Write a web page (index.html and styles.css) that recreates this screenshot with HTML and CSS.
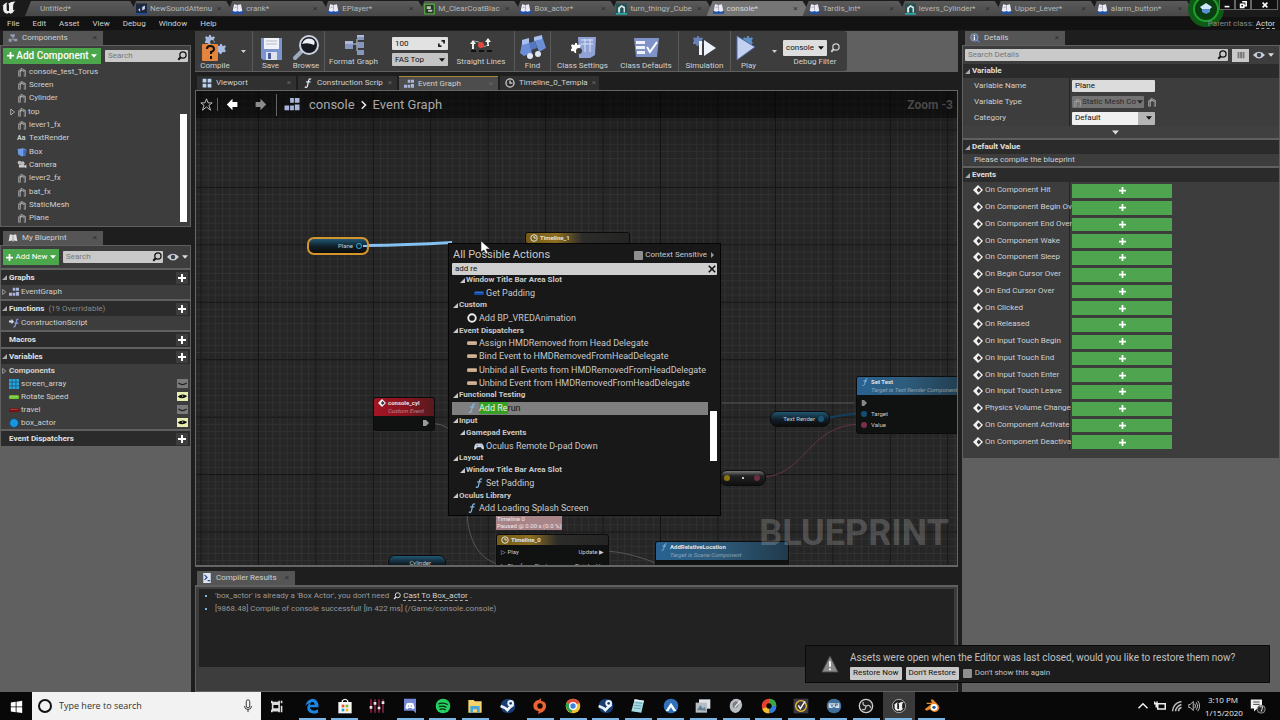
FILE: index.html
```html
<!DOCTYPE html>
<html lang="en">
<head>
    <meta charset="UTF-8">
    <meta name="viewport" content="width=device-width, initial-scale=1.0">
    <title>console - Blueprint Editor</title>
    <link rel="stylesheet" href="styles.css">
</head>
<body>

    <!-- shared icons -->
    <svg class="sprite" aria-hidden="true">
        <symbol id="i-mesh" viewBox="0 0 16 16"><path d="M2 6 7 1l7 4v10h-3V8L8 6 6 8v7H2z" fill="#a9a9a9"/><path d="M3 6l4-3 5 3M4 7v7M12 7v7" stroke="#444" fill="none"/></symbol>
        <symbol id="i-book" viewBox="0 0 16 16"><path d="M0 10h16v5H0z" fill="#1f4fb0"/><path d="M1 11 3 1l5 1 5-1 2 10-4 1-3-1-3 1z" fill="#e9ecf2"/><path d="M8 2v8M4 6l3-1" stroke="#8d929c"/></symbol>
        <symbol id="i-bookw" viewBox="0 0 16 16"><path d="M1 13 3 2l5 1 5-1 2 11-5-1-2 2-2-2z" fill="#e2e2e2"/><path d="M8 4v9" stroke="#666"/></symbol>
        <symbol id="i-meshtab" viewBox="0 0 16 16"><path d="M0 0h16v16H0z" fill="#245154"/><path d="M3 6 8 2l5 3v8h-2V7L8 5 6 7v6H3z" fill="#dfe6e6"/><path d="M0 14h16v2H0z" fill="#28c8c4"/></symbol>
        <symbol id="i-mat" viewBox="0 0 16 16"><path d="M1 1h14v14H1z" fill="#2b332b" stroke="#4ea23a" stroke-width="2"/><path d="M4 4h6v4H4zM6 9h6v3H6z" fill="#b9c4b6"/></symbol>
        <symbol id="i-sound" viewBox="0 0 16 16"><path d="M0 0h16v16H0z" fill="#1b2840"/><path d="M3 9l3-2v5zM9 5l4-2v5l-4 2z" fill="#c9d3ea"/><path d="M0 14h16v2H0z" fill="#2456b5"/></symbol>
        <symbol id="i-graph" viewBox="0 0 16 16"><path d="M6 1h4v5H6zM11 1h5v5h-5zM0 9h5v5H0zM6 9h4v5H6zM11 8h5v6h-5z" fill="#aab5dc"/></symbol>
        <symbol id="i-view" viewBox="0 0 16 16"><path d="M1 1h6v6H1zM9 1h6v6H9zM1 9h6v6H1zM9 9h6v6H9z" fill="#b9d3f3"/></symbol>
        <symbol id="i-fn" viewBox="0 0 16 16"><path d="M13 2C10 0 9 3 8.500 6L7.500 11C7 15 5 16 3 14M5 6h7" fill="none" stroke="#7fb4dc" stroke-width="2"/></symbol>
        <symbol id="i-fnw" viewBox="0 0 16 16"><path d="M13 2C10 0 9 3 8.500 6L7.500 11C7 15 5 16 3 14M5 6h7" fill="none" stroke="#e4eaf6" stroke-width="2"/></symbol>
        <symbol id="i-cons" viewBox="0 0 16 16"><path d="M0 4h4V1l4 5-4 4V7H0z" fill="#d6daf2"/><path d="M15 2c-3-1-3 3-4 7s-2 6-4 5M9 8h6" fill="none" stroke="#8f9de0" stroke-width="2"/></symbol>
        <symbol id="i-clock" viewBox="0 0 16 16"><circle cx="8" cy="8" r="6.500" fill="none" stroke="currentColor" stroke-width="2"/><path d="M8 4v4h4" fill="none" stroke="currentColor" stroke-width="2"/></symbol>
        <symbol id="i-find" viewBox="0 0 16 16"><circle cx="9.500" cy="6.500" r="5" fill="none" stroke="currentColor" stroke-width="2"/><path d="M6 10l-4 4" stroke="currentColor" stroke-width="3"/></symbol>
        <symbol id="i-eye" viewBox="0 0 16 16"><path d="M0 8q8-9 16 0-8 9-16 0z" fill="#ccd0d8"/><circle cx="8" cy="8" r="3" fill="#3a4250"/></symbol>
        <symbol id="i-eyeon" viewBox="0 0 16 16" preserveAspectRatio="none"><path d="M0 0h16v16H0z" fill="#e9edb0"/><path d="M1 8q7-7 14-1-7 8-14 1z" fill="#111"/><circle cx="8" cy="7" r="1" fill="#fff"/></symbol>
        <symbol id="i-eyeoff" viewBox="0 0 16 16" preserveAspectRatio="none"><path d="M0 0h16v16H0z" fill="#7a7a7a"/><path d="M2 7q6 6 12 0" fill="none" stroke="#222" stroke-width="2"/></symbol>
        <symbol id="i-down" viewBox="0 0 10 6"><path d="M0 0h10L5 6z" fill="currentColor"/></symbol>
        <symbol id="i-open" viewBox="0 0 8 8"><path d="M8 0v8H0z" fill="currentColor"/></symbol>
        <symbol id="i-closed" viewBox="0 0 8 8"><path d="M1 0l5 4-5 4z" fill="none" stroke="currentColor"/></symbol>
        <symbol id="i-plus" viewBox="0 0 8 8"><path d="M3 0h2v3h3v2H5v3H3V5H0V3h3z" fill="currentColor"/></symbol>
        <symbol id="i-event" viewBox="0 0 16 16"><path d="M8 0l8 8-8 8-8-8z" fill="#f2f2f2"/><path d="M9 4l4 4-4 4-3-4z" fill="#333"/></symbol>
        <symbol id="i-pill" viewBox="0 0 16 16"><rect y="5" width="16" height="6" rx="2" fill="currentColor"/><path d="M2 7h12" stroke="#fff" opacity=".4"/></symbol>
        <symbol id="i-gear" viewBox="0 0 24 24"><path d="M10 0h4l1 4 3 1 3-2 3 3-3 4v3l3 3-3 4-4-1-3 2-1 3h-4l-1-3-3-2-4 1-2-4 3-3v-3L0 6l3-3 4 2 2-1z" fill="currentColor"/></symbol>
        <symbol id="i-steam" viewBox="0 0 24 24"><circle cx="12" cy="12" r="11" fill="#173e74"/><path d="M1 12l7 3 3 3 4-4 5-4" stroke="#eef3fa" stroke-width="4" fill="none"/><circle cx="16" cy="8" r="5" fill="#eef3fa"/><circle cx="16" cy="8" r="2" fill="#173e74"/></symbol>
        <symbol id="i-unreal" viewBox="0 0 24 24"><path d="M1 8q4-5 8-6-1 2-1 4v10q1 2 4 1V7q0-2-2-2 5-4 13-4-4 3-4 7v8l3-1q-3 6-8 7l-2-2-3 2q-6-1-7-7V8q-1-1-1 0z" fill="#f0f0f0"/></symbol>
    </svg>

    <header class="titlebar">
        <div class="logo"><svg><use href="#i-unreal"/></svg></div>
        <nav class="window-tabs">
            <a class="wtab first" href="#"><span>Untitled*</span></a>
            <a class="wtab" href="#"><svg><use href="#i-sound"/></svg><span>NewSoundAttenu</span><i>×</i></a>
            <a class="wtab" href="#"><svg><use href="#i-book"/></svg><span>crank*</span><i>×</i></a>
            <a class="wtab" href="#"><svg><use href="#i-book"/></svg><span>EPlayer*</span><i>×</i></a>
            <a class="wtab" href="#"><svg><use href="#i-mat"/></svg><span>M_ClearCoatBlac</span><i>×</i></a>
            <a class="wtab" href="#"><svg><use href="#i-book"/></svg><span>Box_actor*</span><i>×</i></a>
            <a class="wtab" href="#"><svg><use href="#i-meshtab"/></svg><span>turn_thingy_Cube</span><i>×</i></a>
            <a class="wtab active" href="#"><svg><use href="#i-book"/></svg><span>console*</span><i>×</i></a>
            <a class="wtab" href="#"><svg><use href="#i-book"/></svg><span>Tardis_int*</span><i>×</i></a>
            <a class="wtab" href="#"><svg><use href="#i-meshtab"/></svg><span>levers_Cylinder*</span><i>×</i></a>
            <a class="wtab" href="#"><svg><use href="#i-book"/></svg><span>Upper_Lever*</span><i>×</i></a>
            <a class="wtab" href="#"><svg><use href="#i-book"/></svg><span>alarm_button*</span><i>×</i></a>
        </nav>
        <svg class="tutorial" viewBox="0 0 38 28"><circle cx="19" cy="9" r="18" fill="#0e5a16"/><circle cx="19" cy="9" r="12" fill="#0a3d10" stroke="#1fa02c" stroke-width="2"/><path d="M13 7l6-4 6 4-6 6z" fill="#cfe4ff"/><path d="M15 9v3l4 2 4-2V9" fill="#5b8fd0"/></svg>
        <div class="win-buttons">
            <button aria-label="Minimize"><svg viewBox="0 0 10 10"><path d="M2 6h6v2H2z" fill="#fff"/></svg></button>
            <button aria-label="Restore"><svg viewBox="0 0 10 10"><path d="M4 1h5v5H7M2 4h4v4H2z" fill="none" stroke="#fff" stroke-width="2"/></svg></button>
            <button aria-label="Close" class="wide"><svg viewBox="0 0 10 10"><path d="M2 2l6 6M8 2 2 8" stroke="#fff" stroke-width="2"/></svg></button>
        </div>
    </header>

    <div class="menubar">
        <a href="#">File</a><a href="#">Edit</a><a href="#">Asset</a><a href="#">View</a><a href="#">Debug</a><a href="#">Window</a><a href="#">Help</a>
        <p class="parent">Parent class: <a href="#">Actor</a></p>
    </div>

    <main class="editor">

        <aside class="left">
            <div class="ptab"><svg viewBox="0 0 16 16"><path d="M4 2h7v4H4zM1 9h5v5H1zM9 9h6v4H9z" fill="#8e9bb0"/><path d="M8 5v6" stroke="#ccc"/></svg><span>Components</span><i>×</i></div>
            <section class="panel components">
                <div class="tools">
                    <button class="green big"><svg><use href="#i-plus"/></svg>Add Component<svg class="arr"><use href="#i-down"/></svg></button>
                    <label class="search"><input type="text" placeholder="Search" aria-label="Search components"><svg><use href="#i-find"/></svg></label>
                </div>
                <div class="tree-wrap">
                    <ul class="tree">
                        <li><svg><use href="#i-mesh"/></svg>console_test_Torus</li>
                        <li><svg><use href="#i-mesh"/></svg>Screen</li>
                        <li><svg><use href="#i-mesh"/></svg>Cylinder</li>
                        <li class="has-children"><svg class="tri"><use href="#i-closed"/></svg><svg><use href="#i-mesh"/></svg>top</li>
                        <li><svg><use href="#i-mesh"/></svg>lever1_fx</li>
                        <li><b class="aa">Aa</b>TextRender</li>
                        <li><svg viewBox="0 0 16 16"><path d="M1 3l9-1 5 2-1 9-6 2-6-3z" fill="#6f9be6"/><path d="M10 4l5 0-1 9-4 1z" fill="#4069b8"/></svg>Box</li>
                        <li><svg viewBox="0 0 16 16"><circle cx="4" cy="4" r="3" fill="#bbb"/><circle cx="9" cy="5" r="3" fill="#bbb"/><path d="M3 7h8v5H3zM11 9l4-2v6l-4-2z" fill="#ccc"/></svg>Camera</li>
                        <li><svg><use href="#i-mesh"/></svg>lever2_fx</li>
                        <li><svg><use href="#i-mesh"/></svg>bat_fx</li>
                        <li><svg><use href="#i-mesh"/></svg>StaticMesh</li>
                        <li><svg><use href="#i-mesh"/></svg>Plane</li>
                    </ul>
                    <div class="thumb"></div>
                </div>
            </section>

            <div class="ptab second"><svg><use href="#i-bookw"/></svg><span>My Blueprint</span><i>×</i></div>
            <section class="panel blueprint">
                <div class="tools">
                    <button class="green"><svg><use href="#i-plus"/></svg>Add New<svg class="arr"><use href="#i-down"/></svg></button>
                    <label class="search"><input type="text" placeholder="Search" aria-label="Search blueprint"><svg><use href="#i-find"/></svg></label>
                    <button class="eye" aria-label="View options"><svg><use href="#i-eye"/></svg><svg class="arr"><use href="#i-down"/></svg></button>
                </div>
                <div class="group">
                    <h3><svg><use href="#i-open"/></svg>Graphs<button aria-label="Add graph"><svg><use href="#i-plus"/></svg></button></h3>
                    <p class="tall"><svg class="tri"><use href="#i-closed"/></svg><svg class="ico"><use href="#i-graph"/></svg>EventGraph</p>
                </div>
                <div class="group">
                    <h3><svg><use href="#i-open"/></svg>Functions <small>(19 Overridable)</small><button aria-label="Add function"><svg><use href="#i-plus"/></svg></button></h3>
                    <p class="tall"><svg class="tri"></svg><svg class="ico"><use href="#i-cons"/></svg>ConstructionScript</p>
                </div>
                <div class="group">
                    <h3><svg></svg>Macros<button aria-label="Add macro"><svg><use href="#i-plus"/></svg></button></h3>
                </div>
                <div class="group">
                    <h3><svg><use href="#i-open"/></svg>Variables<button aria-label="Add variable"><svg><use href="#i-plus"/></svg></button></h3>
                    <p><svg class="tri"><use href="#i-closed"/></svg><b>Components</b></p>
                    <p><svg class="tri"></svg><svg class="ico" viewBox="0 0 16 16"><path d="M0 0h16v16H0z" fill="#28a5dc"/><path d="M5 0v16M11 0v16M0 5h16M0 11h16" stroke="#17405a"/></svg>screen_array<svg class="vis"><use href="#i-eyeoff"/></svg></p>
                    <p><svg class="tri"></svg><svg class="ico lime"><use href="#i-pill"/></svg>Rotate Speed<svg class="vis"><use href="#i-eyeon"/></svg></p>
                    <p><svg class="tri"></svg><svg class="ico maroon"><use href="#i-pill"/></svg>travel<svg class="vis"><use href="#i-eyeoff"/></svg></p>
                    <p><svg class="tri"></svg><svg class="ico" viewBox="0 0 16 16"><circle cx="8" cy="8" r="7" fill="#1795dd" stroke="#0b4770"/></svg>box_actor<svg class="vis"><use href="#i-eyeon"/></svg></p>
                </div>
                <div class="group">
                    <h3><svg></svg>Event Dispatchers<button aria-label="Add dispatcher"><svg><use href="#i-plus"/></svg></button></h3>
                </div>
            </section>
        </aside>

        <section class="center">
            <div class="toolbar">
                <div class="toolbar-inner">
                    <button class="tool w40"><svg viewBox="0 0 28 26"><g color="#a9bbe0"><svg x="4" y="0" width="15" height="15"><use href="#i-gear"/></svg><svg x="15" y="9" width="13" height="14"><use href="#i-gear"/></svg></g><circle cx="11" cy="7" r="2" fill="#3d3d3d"/><rect x="1" y="9" width="16" height="17" rx="1" fill="#e5843c"/><path d="M6 14q0-3 3-3 4 0 4 3 0 2-3 3v2M10 21v3" fill="none" stroke="#111" stroke-width="2"/></svg>Compile</button>
                    <button class="drop" aria-label="Compile options"><svg><use href="#i-down"/></svg></button>
                    <button class="tool w36 sep"><svg viewBox="0 0 28 26"><path d="M4 3h21v22H6l-2-2z" fill="#7b93cf"/><path d="M7 3h15v11H7z" fill="#f1f3f8"/><path d="M9 6h11M9 9h11" stroke="#b3bacb"/><path d="M9 17h11v8H9z" fill="#dfe3ee"/><path d="M11 18h3v6h-3z" fill="#4a5f9a"/></svg>Save</button>
                    <button class="tool w36"><svg viewBox="0 0 28 26"><path d="M10 16 3 23" stroke="#9fa9bd" stroke-width="4" stroke-linecap="round"/><circle cx="17" cy="10" r="9" fill="#16181f" stroke="#ccd2e0" stroke-width="2"/><path d="M10 9q3-7 10-5 4 2 2 6-6-3-12-1z" fill="#eceef5"/></svg>Browse</button>
                    <button class="tool w58 sep short"><svg viewBox="0 0 28 24"><path d="M12 11h5M17 6v12" stroke="#c9cfe0"/><path d="M5 8h8v8H5zM17 2h7v5h-7zM17 9h7v6h-7zM17 17h7v5h-7z" fill="#8796bd"/><path d="M5 8h8v3H5zM17 2h7v2h-7z" fill="#adb9d9"/></svg>Format Graph</button>
                    <div class="fields">
                        <label class="num"><input type="text" value="100" aria-label="Spacing"><svg viewBox="0 0 8 8"><path d="M1 4v3h3M7 4V1H4" fill="none" stroke="#222" stroke-width="2"/></svg></label>
                        <label class="pick"><select aria-label="Layout"><option>FAS Top</option></select><svg><use href="#i-down"/></svg></label>
                    </div>
                    <button class="tool w66 short"><svg viewBox="0 0 28 24"><path d="M6 16V8M21 13V6" stroke="#eee" stroke-width="2"/><path d="M3 11l3-4 3 4zM18 9l3-4 3 4z" fill="#eee"/><path d="M7 8q6 0 8 4t7-2" fill="none" stroke="#aaa"/><circle cx="14" cy="12" r="3" fill="#e2473c"/><path d="M4 18h5M12 18h5M20 18h5" stroke="#111" stroke-width="2"/></svg>Straight Lines</button>
                    <button class="tool w36 sep"><svg viewBox="0 0 28 26"><path d="M3 8l7-2 3 12-8 3-4-3zM15 4l8-3 4 12-7 4z" fill="#6b8fd6"/><path d="M10 8l6-2 2 7-6 2z" fill="#5478c0"/><path d="M3 5l7-2v5l-7 2zM15 2l8-2v4l-8 2z" fill="#a9c0ee"/><circle cx="11" cy="21" r="3" fill="#e0e6f3"/><circle cx="19" cy="19" r="3" fill="#e0e6f3"/></svg>Find</button>
                    <button class="tool w64 sep"><svg viewBox="0 0 28 26"><path d="M9 2h18l-1 18-5 3H10z" fill="#91a3d6"/><path d="M12 5h12M12 9h12M16 4v13M21 4v13" stroke="#dbe2f5"/><g color="#fff"><svg x="2" y="8" width="17" height="17"><use href="#i-gear"/></svg></g><circle cx="10" cy="16" r="3" fill="#3d3d3d"/></svg>Class Settings</button>
                    <button class="tool w64"><svg viewBox="0 0 28 26"><path d="M2 3h25l-2 19H4z" fill="#7f93c8"/><path d="M4 6h9v3H4zM4 11h9v3H4zM5 16h8v3H5z" fill="#eef1fa"/><path d="M15 12l3 5 7-10" fill="none" stroke="#fff" stroke-width="2"/></svg>Class Defaults</button>
                    <button class="tool w51 sep"><svg viewBox="0 0 28 26"><g color="#6a80b8"><svg x="2" y="1" width="24" height="24"><use href="#i-gear"/></svg></g><path d="M8 6h3v14H8zM13 5l12 8-12 8z" fill="#eef2fb"/></svg>Simulation</button>
                    <button class="tool w36 sep"><svg viewBox="0 0 28 26"><g color="#5d8fc4"><svg x="8" y="1" width="20" height="22"><use href="#i-gear"/></svg></g><path d="M2 1l18 11L2 25z" fill="#c3d0ef" stroke="#5168a8"/></svg>Play</button>
                    <button class="drop" aria-label="Play options"><svg><use href="#i-down"/></svg></button>
                    <div class="filter">
                        <div><label class="pick light"><select id="debug"><option>console</option></select><svg><use href="#i-down"/></svg></label><svg class="mag"><use href="#i-find"/></svg></div>
                        <label for="debug">Debug Filter</label>
                    </div>
                </div>
            </div>

            <nav class="doc-tabs">
                <a href="#" class="w99"><svg><use href="#i-view"/></svg><span>Viewport</span><i>×</i></a>
                <a href="#" class="w99"><svg><use href="#i-fnw"/></svg><span>Construction Scrip</span><i>×</i></a>
                <a href="#" class="w99 active"><svg><use href="#i-graph"/></svg><span>Event Graph</span><i>×</i></a>
                <a href="#" class="w99"><svg><use href="#i-clock"/></svg><span>Timeline_0_Templa</span><i>×</i></a>
            </nav>

            <div class="graph">
                <svg class="backdrop">
                    <defs>
                        <pattern id="minor" x="4.500" y="-19" width="7.180" height="7.180" patternUnits="userSpaceOnUse"><path d="M0 .5h8M.5 0v8" stroke="#313131" stroke-width=".9"/></pattern>
                        <pattern id="major" x="4.500" y="-19" width="57.440" height="57.440" patternUnits="userSpaceOnUse"><path d="M0 .5h58M.5 0v58" stroke="#141414"/></pattern>
                        <linearGradient id="shade" x2="0" y2="1"><stop offset="0" stop-color="#000" stop-opacity=".3"/><stop offset=".15" stop-color="#000" stop-opacity="0"/></linearGradient>
                    </defs>
                    <rect width="100%" height="100%" fill="#262626"/>
                    <rect width="100%" height="100%" fill="url(#minor)"/>
                    <rect width="100%" height="100%" fill="url(#major)"/>
                    <rect width="100%" height="100%" fill="url(#shade)"/>
                    <path d="M170 154.500 Q210 154 256 151.500" fill="none" stroke="#84c0f2" stroke-width="3"/>
                    <path d="M236 332q10 1 18 6M526 312h132" fill="none" stroke="#555"/>
                    <path d="M271 424q3 40 30 49M412 460q25 2 52 14" fill="none" stroke="#555"/>
                    <path d="M625 328q16-3 38-6" fill="none" stroke="#12405c" stroke-width="2"/>
                    <path d="M565 386c45 0 45-52 100-53" fill="none" stroke="#643540"/>
                </svg>
                <div class="crumbs">
                    <button aria-label="Favourite" class="star"><svg viewBox="0 0 16 16"><path d="M8 1l2 5h5l-4 3 2 6-5-4-5 4 2-6-4-3h5z" fill="none" stroke="#ddd"/></svg></button>
                    <button aria-label="Back"><svg viewBox="0 0 16 16"><path d="M1 8l7-7v4h6v6H8v4z" fill="#fff"/></svg></button>
                    <button aria-label="Forward"><svg viewBox="0 0 16 16"><path d="M15 8 8 1v4H2v6h6v4z" fill="#8c8c8c"/></svg></button>
                    <div class="path"><svg class="gicon"><use href="#i-graph"/></svg><a href="#">console</a><svg class="chev" viewBox="0 0 8 12"><path d="M1 1l5 5-5 5" fill="none" stroke="#eee" stroke-width="2"/></svg><a href="#">Event Graph</a></div>
                    <span class="zoom">Zoom -3</span>
                </div>

                <div class="node pill selected n-plane">Plane<svg viewBox="0 0 12 8"><circle cx="4" cy="4" r="2.500" fill="none" stroke="#35a7e0"/><path d="M8 4h4" stroke="#8cc6f0" stroke-width="2"/></svg></div>
                <div class="node n-timeline1"><h4 class="gold"><svg><use href="#i-clock"/></svg>Timeline_1</h4></div>
                <div class="node n-console"><h4 class="red"><svg><use href="#i-event"/></svg><span>console_cyl<small>Custom Event</small></span></h4><div class="pins"><span></span><svg viewBox="0 0 8 8"><path d="M1 1h3l3 3-3 3H1z" fill="#999"/></svg></div></div>
                <div class="node pill n-text">Text Render<svg viewBox="0 0 8 8"><circle cx="4" cy="4" r="3" fill="#1a5578"/></svg></div>
                <div class="node n-settext"><h4 class="blue"><svg><use href="#i-fn"/></svg><span>Set Text<small>Target is Text Render Component</small></span></h4>
                    <div class="inputs">
                        <p><svg viewBox="0 0 8 8"><path d="M1 0h3l4 4-4 4H1z" fill="#888"/></svg></p>
                        <p><svg viewBox="0 0 8 8"><circle cx="4" cy="4" r="4" fill="#134e74"/></svg>Target</p>
                        <p><svg viewBox="0 0 8 8"><circle cx="4" cy="4" r="4" fill="#7d2f47"/></svg>Value</p>
                    </div>
                </div>
                <div class="node pill grey n-conv"><svg viewBox="0 0 44 8"><circle cx="6" cy="4" r="3" fill="#8a7412"/><circle cx="22" cy="4" r="1" fill="#fff"/><circle cx="36" cy="4" r="3" fill="#6d2d40"/></svg></div>
                <div class="bubble">Timeline 0<br>Paused @ 0.00 s (0.0 %)</div>
                <div class="node n-timeline0"><h4 class="gold"><svg><use href="#i-clock"/></svg>Timeline_0</h4>
                    <div class="pins"><span>▷ Play</span><span>Update ▶</span></div>
                    <div class="pins"><span>▶ Play from Start</span><span>Finished ▷</span></div>
                </div>
                <div class="node pill n-cyl">Cylinder</div>
                <div class="node n-add"><h4 class="blue"><svg><use href="#i-fn"/></svg><span>AddRelativeLocation<small>Target is Scene Component</small></span></h4></div>
                <div class="watermark">BLUEPRINT</div>

                <div class="actions">
                    <div class="actions-head"><h2>All Possible Actions</h2><label><input type="checkbox">Context Sensitive</label><svg viewBox="0 0 6 8"><path d="M1 0l4 4-4 4z" fill="#999"/></svg></div>
                    <label class="actions-search"><input type="text" value="add re" aria-label="Search actions"><svg viewBox="0 0 10 10"><path d="M1 1l8 8M9 1 1 9" stroke="#111" stroke-width="2"/></svg></label>
                    <div class="actions-body">
                        <ul>
                            <li class="cat sub"><svg><use href="#i-open"/></svg>Window Title Bar Area Slot</li>
                            <li class="deep"><svg class="navy"><use href="#i-pill"/></svg>Get Padding</li>
                            <li class="cat"><svg><use href="#i-open"/></svg>Custom</li>
                            <li><svg viewBox="0 0 16 16"><circle cx="8" cy="8" r="6" fill="none" stroke="#eee" stroke-width="3"/></svg>Add BP_VREDAnimation</li>
                            <li class="cat"><svg><use href="#i-open"/></svg>Event Dispatchers</li>
                            <li><svg class="tan"><use href="#i-pill"/></svg>Assign HMDRemoved from Head Delegate</li>
                            <li><svg class="tan"><use href="#i-pill"/></svg>Bind Event to HMDRemovedFromHeadDelegate</li>
                            <li><svg class="tan"><use href="#i-pill"/></svg>Unbind all Events from HMDRemovedFromHeadDelegate</li>
                            <li><svg class="tan"><use href="#i-pill"/></svg>Unbind Event from HMDRemovedFromHeadDelegate</li>
                            <li class="cat"><svg><use href="#i-open"/></svg>Functional Testing</li>
                            <li class="picked"><svg><use href="#i-fn"/></svg><mark>Add Re</mark>run</li>
                            <li class="cat"><svg><use href="#i-open"/></svg>Input</li>
                            <li class="cat sub"><svg><use href="#i-open"/></svg>Gamepad Events</li>
                            <li class="deep"><svg viewBox="0 0 16 16"><path d="M3 4h10q3 3 3 9h-3l-2-3H5l-2 3H0q0-6 3-9z" fill="#ccd3e4"/><path d="M4 7h2M11 7h1" stroke="#333"/></svg>Oculus Remote D-pad Down</li>
                            <li class="cat"><svg><use href="#i-open"/></svg>Layout</li>
                            <li class="cat sub"><svg><use href="#i-open"/></svg>Window Title Bar Area Slot</li>
                            <li class="deep"><svg><use href="#i-fn"/></svg>Set Padding</li>
                            <li class="cat"><svg><use href="#i-open"/></svg>Oculus Library</li>
                            <li><svg><use href="#i-fn"/></svg>Add Loading Splash Screen</li>
                        </ul>
                        <div class="thumb"></div>
                    </div>
                </div>
                <svg class="cursor" viewBox="0 0 10 14"><path d="M1 0v11l3-2 2 4 2-1-2-4h4z" fill="#fff" stroke="#222" stroke-width=".5"/></svg>
            </div>

            <div class="ptab results-tab"><svg viewBox="0 0 16 16"><path d="M2 0h12v16H2z" fill="#dde6f5"/><path d="M4 3l4 4-4 4M9 12h4" fill="none" stroke="#2b4a86" stroke-width="2"/></svg><span>Compiler Results</span><i>×</i></div>
            <section class="results">
                <ul>
                    <li>'box_actor' is already a 'Box Actor', you don't need <svg><use href="#i-find"/></svg><a href="#">Cast To Box_actor</a> .</li>
                    <li>[9868.48] Compile of console successful! [in 422 ms] (/Game/console.console)</li>
                </ul>
            </section>
        </section>

        <aside class="right">
            <div class="ptab"><svg viewBox="0 0 16 16"><path d="M9 9l6 6" stroke="#557ac0" stroke-width="3"/><circle cx="7" cy="7" r="6" fill="#5b6d94" stroke="#b4bfd8"/><path d="M7 3v2M7 6v5" stroke="#fff" stroke-width="2"/></svg><span>Details</span><i>×</i></div>
            <section class="panel details">
                <div class="tools">
                    <label class="search"><input type="text" placeholder="Search Details" aria-label="Search details"><svg><use href="#i-find"/></svg></label>
                    <button class="matrix" aria-label="Property matrix"><svg viewBox="0 0 16 12"><path d="M4 1v10M8 1v10M12 1v10" stroke="#777" stroke-width="3"/></svg></button>
                    <button class="eye" aria-label="View options"><svg><use href="#i-eye"/></svg><svg class="arr"><use href="#i-down"/></svg></button>
                </div>
                <h3><svg><use href="#i-open"/></svg>Variable</h3>
                <div class="props">
                    <label for="vname">Variable Name</label><div><input id="vname" type="text" value="Plane"></div>
                    <label for="vtype">Variable Type</label><div class="type"><label class="pick off"><svg class="mesh"><use href="#i-mesh"/></svg><select id="vtype" disabled><option>Static Mesh Co</option></select><svg><use href="#i-down"/></svg></label><svg class="mesh"><use href="#i-mesh"/></svg></div>
                    <label for="vcat">Category</label><div><label class="pick cat"><select id="vcat"><option>Default</option></select><svg><use href="#i-down"/></svg></label></div>
                </div>
                <button class="more" aria-label="Show advanced"><svg><use href="#i-down"/></svg></button>
                <h3 class="line"><svg><use href="#i-open"/></svg>Default Value</h3>
                <p class="note">Please compile the blueprint</p>
                <h3 class="line"><svg><use href="#i-open"/></svg>Events</h3>
                <ul class="events">
                    <li><span><svg><use href="#i-event"/></svg>On Component Hit</span><button aria-label="Add"><svg><use href="#i-plus"/></svg></button></li>
                    <li><span><svg><use href="#i-event"/></svg>On Component Begin Ov</span><button aria-label="Add"><svg><use href="#i-plus"/></svg></button></li>
                    <li><span><svg><use href="#i-event"/></svg>On Component End Over</span><button aria-label="Add"><svg><use href="#i-plus"/></svg></button></li>
                    <li><span><svg><use href="#i-event"/></svg>On Component Wake</span><button aria-label="Add"><svg><use href="#i-plus"/></svg></button></li>
                    <li><span><svg><use href="#i-event"/></svg>On Component Sleep</span><button aria-label="Add"><svg><use href="#i-plus"/></svg></button></li>
                    <li><span><svg><use href="#i-event"/></svg>On Begin Cursor Over</span><button aria-label="Add"><svg><use href="#i-plus"/></svg></button></li>
                    <li><span><svg><use href="#i-event"/></svg>On End Cursor Over</span><button aria-label="Add"><svg><use href="#i-plus"/></svg></button></li>
                    <li><span><svg><use href="#i-event"/></svg>On Clicked</span><button aria-label="Add"><svg><use href="#i-plus"/></svg></button></li>
                    <li><span><svg><use href="#i-event"/></svg>On Released</span><button aria-label="Add"><svg><use href="#i-plus"/></svg></button></li>
                    <li><span><svg><use href="#i-event"/></svg>On Input Touch Begin</span><button aria-label="Add"><svg><use href="#i-plus"/></svg></button></li>
                    <li><span><svg><use href="#i-event"/></svg>On Input Touch End</span><button aria-label="Add"><svg><use href="#i-plus"/></svg></button></li>
                    <li><span><svg><use href="#i-event"/></svg>On Input Touch Enter</span><button aria-label="Add"><svg><use href="#i-plus"/></svg></button></li>
                    <li><span><svg><use href="#i-event"/></svg>On Input Touch Leave</span><button aria-label="Add"><svg><use href="#i-plus"/></svg></button></li>
                    <li><span><svg><use href="#i-event"/></svg>Physics Volume Change</span><button aria-label="Add"><svg><use href="#i-plus"/></svg></button></li>
                    <li><span><svg><use href="#i-event"/></svg>On Component Activate</span><button aria-label="Add"><svg><use href="#i-plus"/></svg></button></li>
                    <li><span><svg><use href="#i-event"/></svg>On Component Deactiva</span><button aria-label="Add"><svg><use href="#i-plus"/></svg></button></li>
                </ul>
            </section>
        </aside>
    </main>

    <div class="toast">
        <svg viewBox="0 0 20 20"><path d="M10 1l9 18H1z" fill="#8b8b8b" stroke="#444"/><path d="M10 7v6M10 15v2" stroke="#fff" stroke-width="2"/></svg>
        <div>
            <p>Assets were open when the Editor was last closed, would you like to restore them now?</p>
            <div class="toast-row"><button>Restore Now</button><button>Don't Restore</button><label><input type="checkbox">Don't show this again</label></div>
        </div>
    </div>

    <footer class="taskbar">
        <button class="start" aria-label="Start"><svg viewBox="0 0 16 16"><path d="M1 3l6-1v6H1zM8 2l7-1v7H8zM1 9h6v6l-6-1zM8 9h7v7l-7-1z" fill="#fff"/></svg></button>
        <label class="tsearch"><svg class="ring" viewBox="0 0 16 16"><circle cx="8" cy="8" r="6" fill="none" stroke="#111" stroke-width="2"/></svg><input type="text" placeholder="Type here to search" aria-label="Type here to search"><svg class="mic" viewBox="0 0 10 16"><rect x="3" y="1" width="4" height="9" rx="2" fill="none" stroke="#222"/><path d="M1 8q0 4 4 4t4-4M5 12v3" fill="none" stroke="#222"/></svg></label>
        <button class="taskview" aria-label="Task view"><svg viewBox="0 0 16 16"><path d="M2 5h8v6H2zM1 1v2h9V1M1 15v-2h9v2M13 1v3M13 7v8" fill="none" stroke="#ddd" stroke-width="2"/></svg></button>
        <nav class="apps">
            <a href="#" class="open" aria-label="Edge"><svg viewBox="0 0 24 24"><path d="M2 12Q4 2 13 1q9 1 9 13H9q1 5 6 5 3 0 6-2v5q-4 2-9 1-8-2-7-10 1-4 4-5-4 0-7 4zM9 10h7q0-4-3-4-4 0-4 4z" fill="#1d86e0"/></svg></a>
            <a href="#" class="open" aria-label="Store"><svg viewBox="0 0 24 24"><path d="M8 7V4q4-4 8 0v3" fill="none" stroke="#eee" stroke-width="2"/><path d="M2 6h20v17H2z" fill="#f5f5f5"/><path d="M7 10h4v4H7z" fill="#e8502a"/><path d="M13 10h4v4h-4z" fill="#7cb52c"/><path d="M7 16h4v4H7z" fill="#1f9fe0"/><path d="M13 16h4v4h-4z" fill="#f5b51b"/></svg></a>
            <a href="#" aria-label="Mixer"><svg viewBox="0 0 24 24"><path d="M3 2v20M9 2v20M15 2v20M21 2v20" stroke="#a92852" stroke-width="2"/><path d="M1 12h4v4H1zM7 6h4v4H7zM13 13h4v4h-4zM19 5h4v4h-4z" fill="#e8e8e8"/></svg></a>
            <a href="#" class="open" aria-label="Discord"><svg viewBox="0 0 24 24"><path d="M3 1h18v22l-4-4H3z" fill="#7387d6"/><path d="M7 8q5-2 10 0l2 7-3 2-2-2h-4l-2 2-3-2z" fill="#fff"/><circle cx="10" cy="12" r="1" fill="#7387d6"/><circle cx="14" cy="12" r="1" fill="#7387d6"/></svg></a>
            <a href="#" class="open" aria-label="Spotify"><svg viewBox="0 0 24 24"><circle cx="12" cy="12" r="11" fill="#23cf5f"/><path d="M5 9q8-3 14 1M6 13q6-2 11 1M7 17q5-2 9 1" fill="none" stroke="#0c2a16" stroke-width="2"/></svg></a>
            <a href="#" class="open" aria-label="Explorer"><svg viewBox="0 0 24 24"><path d="M2 3h8l2 2h10v17H2z" fill="#f4d36b"/><path d="M5 12h14v10h-4v-5H9v5H5z" fill="#4aa6dd"/></svg></a>
            <a href="#" aria-label="Steam"><svg><use href="#i-steam"/></svg></a>
            <a href="#" class="open" aria-label="Origin"><svg viewBox="0 0 24 24"><path d="M14 0l-1 4q9 1 8 9-1 7-8 9l-4 2 1-4q-8-1-8-9 1-7 8-8z" fill="#ea6434"/><circle cx="12" cy="12" r="4" fill="#120805"/></svg></a>
            <a href="#" class="open" aria-label="Chrome"><svg viewBox="0 0 24 24"><circle cx="12" cy="12" r="11" fill="#f2c12e"/><path d="M12 12 2 7Q6 1 12 1t10 6z" fill="#dd4b3a"/><path d="M12 12 2 7q-3 10 8 16z" fill="#2ea052"/><circle cx="12" cy="12" r="5" fill="#3f7fe0" stroke="#fff" stroke-width="2"/></svg></a>
            <a href="#" class="open" aria-label="Steam"><svg><use href="#i-steam"/></svg></a>
            <a href="#" class="open" aria-label="Notepad"><svg viewBox="0 0 24 24"><path d="M7 2l14 2-4 18-15-2z" fill="#a6dbe2"/><path d="M8 7l10 1M7 11l10 1M6 15l10 1" stroke="#4d8b97"/><path d="M7 2l14 2v2L6 4z" fill="#e8f4f5"/></svg></a>
            <a href="#" class="open" aria-label="NordVPN"><svg viewBox="0 0 24 24"><circle cx="12" cy="12" r="11" fill="#2f72bb"/><path d="M4 19l8-12 8 12-4 1-4-6-4 6z" fill="#fff"/></svg></a>
            <a href="#" class="open" aria-label="Photos"><svg viewBox="0 0 24 24"><path d="M6 2h17v14H6z" fill="#dfe2e4"/><path d="M1 7h17v15H1z" fill="#b5bcc2"/><path d="M3 18l5-7 4 5 2-3 3 6z" fill="#5f7f95"/></svg></a>
            <a href="#" class="open" aria-label="Paint"><svg viewBox="0 0 24 24"><path d="M4 6q6-8 14-3 6 6 1 14-5 8-12 4-7-5-3-15z" fill="#b9bcc0"/><path d="M8 7q6-5 8 2-1 7-7 6-4-3-1-8z" fill="#7b8088"/><path d="M10 14l9-10" stroke="#eee" stroke-width="2"/></svg></a>
            <a href="#" class="open" aria-label="Colours"><svg viewBox="0 0 24 24"><circle cx="12" cy="12" r="11" fill="#e6402e"/><path d="M12 12V1q11 0 11 11z" fill="#38a846"/><path d="M12 12h11q0 11-11 11z" fill="#2f7de0"/><path d="M12 12v11Q4 23 2 16z" fill="#f0bd27"/><circle cx="12" cy="12" r="4" fill="#0a0a0a"/></svg></a>
            <a href="#" class="open" aria-label="Norton"><svg viewBox="0 0 24 24"><path d="M1 1h22v22H1z" fill="#3a3c42"/><circle cx="12" cy="12" r="8" fill="none" stroke="#f0bb2c" stroke-width="2"/><path d="M8 11l3 5 7-11" fill="none" stroke="#fff" stroke-width="2"/></svg></a>
            <a href="#" class="open" aria-label="VR"><svg viewBox="0 0 24 24"><circle cx="12" cy="12" r="11" fill="#41709c"/><path d="M4 8h16v7h-5l-3-2-3 2H4z" fill="#d6e1ec"/><path d="M7 9l2 4 2-4M14 13V9h3v2h-3" fill="none" stroke="#27496d"/></svg></a>
            <a href="#" class="open" aria-label="OBS"><svg viewBox="0 0 24 24"><circle cx="12" cy="12" r="10" fill="#1b1b1d" stroke="#ccc" stroke-width="2"/><path d="M12 12q-6-1-4-6M12 12q6-3 7 3M12 12q0 7-6 5" fill="none" stroke="#bbb" stroke-width="2"/></svg></a>
            <a href="#" class="open current" aria-label="Unreal Editor"><svg viewBox="0 0 24 24"><circle cx="12" cy="12" r="10" fill="#222" stroke="#ddd"/><svg x="4" y="4" width="16" height="16"><use href="#i-unreal"/></svg></svg></a>
            <a href="#" class="open" aria-label="Blender"><svg viewBox="0 0 24 24"><path d="M1 17 11 9H4V7h8l-2-4 3-1 8 8q4 4 0 9-7 5-12-2l-5 2z" fill="#ec8b2b"/><circle cx="15" cy="14" r="5" fill="#fff"/><circle cx="15" cy="14" r="2.500" fill="#235a9c"/></svg></a>
        </nav>
        <div class="tray">
            <svg viewBox="0 0 16 16"><path d="M2 11l6-6 6 6" fill="none" stroke="#eee" stroke-width="2"/></svg>
            <svg viewBox="0 0 16 16"><path d="M5 5h10v7H5zM1 2v3h3V2M3 5v4h2" fill="none" stroke="#eee" stroke-width="2"/></svg>
            <svg viewBox="0 0 16 16"><path d="M2 15Q3 4 14 2M6 15q1-7 8-9M10 15q0-4 4-5" fill="none" stroke="#bbb" stroke-width="2"/></svg>
            <svg viewBox="0 0 16 16"><path d="M1 6h2l4-4v12l-4-4H1zM9 5q2 3 0 6M11 3q4 5 0 10M13 1q5 7 0 14" fill="none" stroke="#eee"/></svg>
            <time>3:10 PM<br>1/15/2020</time>
            <svg class="notes" viewBox="0 0 20 20"><path d="M1 2h14v11H9l-4 4v-4H1z" fill="#f2f2f2"/><path d="M4 5h8M4 8h8" stroke="#222"/><circle cx="14" cy="14" r="5" fill="#222" stroke="#aaa"/><path d="M12 11h4l-2 6" fill="none" stroke="#fff"/></svg>
        </div>
    </footer>

</body>
</html>
```

FILE: styles.css
```css
* {
    box-sizing: border-box;
}

body {
    margin: 0;
    height: 100vh;
    display: flex;
    flex-direction: column;
    overflow: hidden;
    background: #1e1e1e;
    color: #d0d0d0;
    font-family: Roboto, "Liberation Sans", sans-serif;
    font-size: 8px;
    line-height: 12px;
}

ul, p, h2, h3, h4 {
    margin: 0;
    padding: 0;
    list-style: none;
    font-weight: 400;
    font-size: 8px;
}

a {
    color: inherit;
    text-decoration: none;
}

button, input, select {
    font: inherit;
    color: inherit;
    margin: 0;
    padding: 0;
    border: none;
    border-radius: 0;
    background: none;
    outline: none;
    appearance: none;
}

svg {
    display: block;
    flex: none;
    width: 10px;
    height: 10px;
}

i {
    font-style: normal;
    color: #2e2e2e;
}

.sprite {
    display: none;
}

/* title bar */
.titlebar {
    display: flex;
    height: 17px;
    background: #1b1b1b;
    flex: none;
}

.logo {
    width: 25px;
}

.logo svg {
    width: 14px;
    height: 14px;
    margin: 1px 2px;
}

.window-tabs {
    display: flex;
    flex: 1;
    padding-right: 3px;
}

.wtab {
    display: flex;
    align-items: center;
    flex: 1 1 0;
    min-width: 0;
    height: 15px;
    margin: 1px -9px 0 0;
    padding: 0 14px 0 6px;
    gap: 3px;
    background: linear-gradient(#5a5a5a, #484848);
    clip-path: polygon(0 100%, 6px 0, calc(100% - 9px) 0, 100% 100%);
    white-space: nowrap;
    color: #b8b8b8;
}

.wtab.first {
    padding-left: 15px;
}

.wtab.active {
    background: #757575;
    color: #d8d8d8;
}

.wtab svg {
    width: 11px;
    height: 12px;
}

.wtab i {
    margin-left: auto;
}

.tutorial {
    width: 38px;
    height: 28px;
    z-index: 1;
    margin-left: -3px;
}

.win-buttons {
    display: flex;
    position: relative;
    z-index: 2;
    margin: 0 2px 0 -6px;
}

.win-buttons button {
    display: flex;
    align-items: center;
    justify-content: center;
    width: 16px;
    height: 10px;
    border: 1px solid #666;
    border-top: none;
    background: #111;
}

.win-buttons .wide {
    width: 27px;
}

.win-buttons svg {
    width: 8px;
    height: 8px;
}

.menubar {
    display: flex;
    align-items: center;
    flex: none;
    gap: 13px;
    height: 13px;
    padding: 0 5px 0 7px;
    background: #121212;
}

.parent {
    position: relative;
    z-index: 2;
    margin-left: auto;
    color: #888;
}

.parent a {
    color: #ddd;
    border-bottom: 1px dashed #aaa;
}

/* columns */
.editor {
    display: flex;
    flex: 1;
    gap: 4px;
    min-height: 0;
    padding-top: 1px;
}

.left {
    display: flex;
    flex-direction: column;
    width: 191px;
}

.center {
    display: flex;
    flex-direction: column;
    flex: 1;
    min-width: 0;
}

.right {
    display: flex;
    flex-direction: column;
    width: 318px;
}

.ptab {
    display: flex;
    align-items: center;
    flex: none;
    gap: 4px;
    width: 100px;
    height: 14px;
    margin-left: 3px;
    padding: 0 6px 0 5px;
    background: #555;
}

.ptab i {
    margin-left: auto;
}

.ptab.second {
    margin-top: 4px;
}

.panel {
    background: #3d3d3d;
    border: 1px solid #606060;
}

.tools {
    display: flex;
    align-items: center;
    gap: 4px;
    padding: 2px;
}

.green {
    display: flex;
    align-items: center;
    justify-content: center;
    gap: 2px;
    width: 56px;
    height: 16px;
    background: #4ca64c;
    color: #fff;
}

.green.big {
    width: 98px;
    font-size: 10px;
    font-weight: 500;
}

.green svg {
    width: 7px;
    height: 7px;
}

svg.arr {
    width: 6px;
    height: 4px;
}

.search {
    display: flex;
    align-items: center;
    flex: 1;
    min-width: 0;
    height: 12px;
    padding: 0 1px 0 3px;
    background: #c9c9c9;
    color: #111;
    border-radius: 1px;
}

.search input {
    flex: 1;
    min-width: 0;
}

.search input::placeholder {
    color: #777;
}

.eye {
    display: flex;
    align-items: center;
    gap: 3px;
    color: #ddd;
}

.eye svg:first-child {
    width: 12px;
    height: 12px;
}

/* components tree */
.components {
    height: 182px;
}

.components .tools {
    height: 19px;
}

.tree-wrap {
    display: flex;
    justify-content: space-between;
    height: 160px;
}

.tree {
    display: flex;
    flex-direction: column;
}

.tree li {
    display: flex;
    align-items: center;
    flex: 1;
    gap: 2px;
    padding-left: 16px;
}

.tree .has-children {
    padding-left: 9px;
    gap: 1px;
}

.tree .tri {
    width: 6px;
    height: 6px;
}

.aa {
    width: 10px;
    font-size: 7px;
}

.thumb {
    width: 7px;
    background: #fff;
}

.tree-wrap .thumb {
    margin: 49px 3px 3px 0;
}

/* my blueprint */
.blueprint {
    flex: 1;
    background: #606060;
}

.blueprint .tools {
    background: #3d3d3d;
    height: 22px;
}

.group {
    margin-top: 2px;
    background: #3d3d3d;
}

.group h3 {
    display: flex;
    align-items: center;
    gap: 2px;
    height: 15px;
    padding: 0 2px 0 1px;
    background: #2b2b2b;
    color: #e0e0e0;
    font-weight: 700;
}

.group h3 > svg,
.details h3 > svg {
    width: 5px;
    height: 5px;
    color: #aaa;
}

.group small {
    font-size: 8px;
    font-weight: 400;
    color: #888;
    margin-left: 2px;
}

.group h3 button {
    display: flex;
    align-items: center;
    justify-content: center;
    width: 12px;
    height: 12px;
    margin-left: auto;
    background: #3d3d3d;
    color: #fff;
}

.group button svg {
    width: 8px;
    height: 8px;
}

.group p {
    display: flex;
    align-items: center;
    height: 13px;
    padding: 0 2px 0 1px;
    gap: 2px;
}

.group p.tall {
    height: 14px;
}

.group .tri {
    width: 5px;
    height: 6px;
}

.group .ico {
    width: 10px;
    height: 10px;
}

.group .vis {
    margin-left: auto;
    height: 9px;
    width: 11px;
}

.lime {
    color: #74c92e;
}

.maroon {
    color: #7c0d10;
}

/* toolbar */
.toolbar {
    background: #606060;
    height: 41px;
    flex: none;
}

.toolbar-inner {
    display: flex;
    align-items: stretch;
    width: 652px;
    height: 40px;
    background: #3d3d3d;
    border-radius: 0 3px 3px 0;
}

.tool {
    display: flex;
    flex-direction: column;
    align-items: center;
    justify-content: flex-end;
    flex: none;
    white-space: nowrap;
    line-height: 10px;
}

.tool > svg {
    width: 28px;
    height: 26px;
}

.tool.short {
    padding-bottom: 4px;
}

.tool.short > svg {
    height: 24px;
}

.sep {
    border-left: 1px solid #5a5a5a;
}

.w36 { width: 36px; }
.w40 { width: 40px; }
.w51 { width: 52px; }
.w58 { width: 58px; }
.w64 { width: 64px; }
.w66 { width: 66px; }

.drop {
    width: 17px;
    display: flex;
    align-items: center;
    justify-content: center;
}

.drop svg {
    width: 5px;
    height: 3px;
}

.fields {
    display: flex;
    flex-direction: column;
    gap: 3px;
    width: 56px;
    margin-left: 10px;
    padding-top: 6px;
}

.num,
.pick {
    display: flex;
    align-items: center;
    justify-content: space-between;
    height: 13px;
    padding: 0 3px;
    border-radius: 1px;
    background: #e2e2e2;
    color: #111;
}

.num input {
    width: 30px;
}

.num svg {
    width: 7px;
    height: 7px;
}

.pick {
    background: #c4c4c4;
}

.pick select {
    flex: 1;
    min-width: 0;
    opacity: 1;
}

.pick svg {
    width: 6px;
    height: 4px;
}

.filter {
    width: 64px;
    padding: 9px 0 0 0;
    text-align: center;
}

.filter > div {
    display: flex;
    align-items: center;
    gap: 3px;
}

.pick.light {
    width: 44px;
    height: 16px;
    background: #dedede;
}

/* document tabs */
.doc-tabs {
    display: flex;
    flex: none;
    height: 14px;
    margin-top: 4px;
    padding-left: 2px;
    gap: 2px;
}

.doc-tabs a {
    display: flex;
    align-items: center;
    gap: 4px;
    padding: 0 5px;
    background: #303030;
    white-space: nowrap;
}

.doc-tabs .active {
    background: #4d4d4d;
    border-top: 1px solid #a58834;
}

.doc-tabs i {
    margin-left: auto;
    color: #666;
}

.w99 {
    width: 99px;
}

/* graph canvas */
.graph {
    position: relative;
    flex: 1;
    overflow: hidden;
    border: 1px solid #666;
    border-bottom-width: 2px;
}

.backdrop {
    position: absolute;
    inset: 0;
    width: 100%;
    height: 100%;
}

.crumbs {
    position: relative;
    display: flex;
    align-items: center;
    height: 27px;
    background: rgba(0, 0, 0, 0.45);
    color: #a8a8a8;
    font-size: 13px;
}

.crumbs button {
    width: 28px;
    display: flex;
    justify-content: center;
}

.crumbs .star {
    width: 22px;
    border-right: 1px solid #666;
}

.crumbs button svg {
    width: 13px;
    height: 13px;
}

.path {
    display: flex;
    align-items: center;
    gap: 6px;
    height: 22px;
    margin-left: 2px;
    padding-left: 7px;
    border-left: 1px solid #666;
}

.path .gicon {
    width: 16px;
    height: 15px;
    margin-right: 3px;
}

.path .chev {
    width: 6px;
    height: 10px;
}

.zoom {
    margin-left: auto;
    padding-right: 4px;
    font-size: 12px;
    font-weight: 700;
    color: #484848;
}

.node {
    position: absolute;
    border: 1px solid #0c0c0c;
    border-radius: 3px;
    background: #101211;
    color: #ccc;
    font-size: 6px;
    line-height: 8px;
    overflow: hidden;
}

.node svg {
    width: 8px;
    height: 8px;
}

.node h4 {
    display: flex;
    align-items: flex-start;
    gap: 2px;
    padding: 1px 4px;
    font-size: 6px;
    font-weight: 700;
    color: #e2e2e2;
}

.node small {
    display: block;
    font-size: 6px;
    font-style: italic;
    font-weight: 400;
    opacity: 0.5;
    white-space: nowrap;
}

.gold {
    background: linear-gradient(90deg, #755b16, #8c6e20 30%, #2c2c2a 55%, #242424);
}

.red {
    background: linear-gradient(90deg, #a31524, #8a1420 50%, #551a1e);
}

.blue {
    background: linear-gradient(90deg, #286291, #2e5c7c 45%, #203a4c);
}

.pins {
    display: flex;
    justify-content: space-between;
    align-items: center;
    padding: 3px 4px;
}

.pill {
    display: flex;
    align-items: center;
    justify-content: flex-end;
    gap: 2px;
    height: 16px;
    border-radius: 7px;
    padding-right: 4px;
    background: linear-gradient(#1f5874, #101d26 55%, #0c0c0c);
}

.selected {
    border: 2px solid #d5942c;
}

.grey {
    background: linear-gradient(#777, #222 35%, #101010);
}

.n-plane { left: 111px; top: 146px; width: 62px; height: 18px; padding-right: 0; }
.n-plane svg { width: 12px; }
.n-timeline1 { left: 329px; top: 141px; width: 105px; }
.n-console { left: 177px; top: 306px; width: 62px; }
.n-text { left: 574px; top: 320px; width: 60px; }
.n-settext { left: 660px; top: 285px; width: 110px; }
.n-conv { left: 524px; top: 379px; width: 46px; padding: 0; }
.n-conv svg { width: 44px; }
.n-timeline0 { left: 300px; top: 443px; width: 113px; }
.n-cyl { left: 192px; top: 464px; width: 58px; padding-right: 14px; }
.n-add { left: 459px; top: 450px; width: 134px; height: 30px; }

.inputs {
    display: flex;
    flex-direction: column;
    gap: 3px;
    padding: 4px;
}

.inputs p {
    display: flex;
    gap: 4px;
    font-size: 6px;
}

.inputs svg {
    width: 6px;
}

.bubble {
    position: absolute;
    left: 300px;
    top: 423px;
    padding: 1px;
    background: #a88489;
    color: #f1e6e7;
    font-size: 6px;
    line-height: 7px;
    white-space: nowrap;
}

.watermark {
    position: absolute;
    right: 8px;
    bottom: 12px;
    font-size: 36px;
    line-height: 40px;
    font-weight: 700;
    color: rgba(255, 255, 255, 0.2);
}

/* action menu */
.actions {
    position: absolute;
    left: 252px;
    top: 152px;
    width: 273px;
    padding: 3px;
    background: #181818;
    border: 1px solid #050505;
    color: #c8c8c8;
}

.actions-head {
    display: flex;
    align-items: center;
    gap: 3px;
    height: 16px;
    padding: 0 2px 0 1px;
}

.actions-head h2 {
    flex: 1;
    font-size: 11px;
    color: #c8c8c8;
}

.actions-head label {
    display: flex;
    gap: 2px;
    align-items: center;
}

.actions-head svg {
    width: 5px;
    height: 6px;
}

input[type="checkbox"] {
    width: 9px;
    height: 9px;
    background: #8f8f8f;
    border-radius: 1px;
}

.actions-search {
    position: relative;
    display: flex;
    align-items: center;
    height: 12px;
    padding: 0 1px 0 3px;
    background: #cfcfcf;
    color: #111;
    border-radius: 1px;
    z-index: 1;
}

.actions-search input {
    flex: 1;
}

.actions-search svg {
    width: 8px;
    height: 8px;
}

.actions-body {
    display: flex;
    gap: 2px;
    height: 237px;
}

.actions-body ul {
    flex: 1;
    display: flex;
    flex-direction: column;
    justify-content: space-between;
    margin: -1px 0 -3px;
    font-size: 9px;
}

.actions-body li {
    display: flex;
    align-items: center;
    gap: 2px;
    height: 13px;
    padding-left: 15px;
    white-space: nowrap;
}

.actions-body li.deep {
    padding-left: 22px;
}

.actions-body li.cat {
    height: 12px;
    padding-left: 1px;
    gap: 1px;
    font-size: 8px;
    font-weight: 700;
}

.actions-body li.sub {
    padding-left: 8px;
}

.actions-body .cat svg {
    width: 5px;
    height: 5px;
}

.actions-body li.picked {
    gap: 0;
    background: #7f7f7f;
    color: #111;
}

.picked svg {
    margin-right: 2px;
}

mark {
    background: #35a028;
    color: #eee;
}

.navy {
    color: #1249a8;
}

.tan {
    color: #c9a98a;
}

.actions-body .thumb {
    height: 50px;
    margin-top: 136px;
}

.cursor {
    position: absolute;
    left: 284px;
    top: 150px;
    width: 10px;
    height: 14px;
}

/* compiler results */
.results-tab {
    width: 98px;
    margin: 4px 0 0 2px;
}

.results {
    height: 107px;
    padding: 2px 3px 24px;
    background: #3d3d3d;
    border: 1px solid #606060;
    border-top-width: 2px;
    flex: none;
}

.results ul {
    height: 100%;
    padding: 0 6px;
    background: #222;
    color: #999;
}

.results li {
    display: flex;
    align-items: center;
    height: 13px;
    gap: 2px;
}

.results li::before {
    content: "";
    width: 2px;
    height: 2px;
    margin-right: 6px;
    background: #76b7e8;
}

.results svg {
    width: 8px;
    height: 8px;
    margin-left: 2px;
    color: #ddd;
}

.results a {
    color: #d0d0d0;
    line-height: 9px;
    border-bottom: 1px dashed #aaa;
}

/* details */
.right {
    background: linear-gradient(#1e1e1e 14px, #606060 14px);
}

.details .tools {
    height: 18px;
}

.matrix {
    width: 17px;
    height: 13px;
    background: #c9c9c9;
    display: flex;
    align-items: center;
    justify-content: center;
}

.details .eye {
    margin: 0 3px 0 0;
}

.details h3 {
    display: flex;
    align-items: center;
    gap: 2px;
    height: 14px;
    padding-left: 2px;
    background: #2b2b2b;
    color: #e0e0e0;
    font-weight: 700;
}

.details h3.line {
    height: 16px;
    border-top: 2px solid #606060;
}

.props {
    display: grid;
    grid-template-columns: 107px 1fr;
    grid-auto-rows: 16px;
    align-items: center;
}

.props > label {
    padding-left: 11px;
    border-right: 1px solid #222;
    line-height: 16px;
}

.props > div {
    padding-left: 2px;
}

.props input {
    width: 83px;
    height: 12px;
    padding: 0 3px;
    background: #dcdcdc;
    color: #111;
    border-radius: 1px;
    display: block;
}

.props .type {
    display: flex;
    align-items: center;
    gap: 3px;
}

.pick.off {
    width: 72px;
    height: 12px;
    padding: 0 1px;
    background: #737373;
    color: #2a2a2a;
}

.pick.off .mesh {
    width: 9px;
    height: 9px;
}

.pick.cat {
    width: 83px;
    background: linear-gradient(90deg, #f0f0f0 66px, #b5b5b5 66px);
}

.more {
    display: flex;
    width: 100%;
    height: 12px;
    padding-right: 12px;
    align-items: center;
    justify-content: center;
    background: #404040;
    color: #ddd;
}

.more svg {
    width: 7px;
    height: 5px;
}

.note {
    padding-left: 11px;
}

.events {
    display: flex;
    flex-direction: column;
    height: 276px;
    padding-bottom: 8px;
}

.events li {
    display: flex;
    flex: 1;
    gap: 2px;
}

.events span {
    display: flex;
    align-items: center;
    gap: 2px;
    width: 107px;
    padding-left: 10px;
    border-right: 1px solid #222;
    white-space: nowrap;
}

.events button {
    width: 100px;
    margin: 2px 0 1px;
    background: #4fa54f;
    color: #fff;
    display: flex;
    align-items: center;
    justify-content: center;
}

.events button svg {
    width: 7px;
    height: 7px;
}

/* restore notification */
.toast {
    position: fixed;
    right: 10px;
    bottom: 37px;
    display: flex;
    align-items: center;
    gap: 11px;
    width: 465px;
    height: 38px;
    padding: 0 15px;
    background: #1c1c1c;
    border: 1px solid #0a0a0a;
    color: #c0c0c0;
}

.toast > svg {
    width: 18px;
    height: 20px;
}

.toast p {
    font-size: 10px;
    line-height: 18px;
    white-space: nowrap;
}

.toast-row {
    display: flex;
    gap: 4px;
    align-items: center;
}

.toast button {
    height: 13px;
    padding: 0 3px;
    background: #c9c9c9;
    color: #111;
    border-radius: 1px;
}

.toast label {
    display: flex;
    align-items: center;
    gap: 3px;
}

/* windows taskbar */
.taskbar {
    display: flex;
    flex: none;
    height: 28px;
    background: #080808;
    font-family: "Open Sans", "Noto Sans", sans-serif;
}

.taskbar button {
    display: flex;
    align-items: center;
    justify-content: center;
    width: 32px;
}

.start svg,
.taskview svg {
    width: 13px;
    height: 13px;
}

.tsearch {
    display: flex;
    align-items: center;
    gap: 6px;
    width: 229px;
    padding: 0 8px 0 5px;
    background: #f2f2f2;
    color: #333;
    font-size: 9px;
}

.tsearch input {
    flex: 1;
    min-width: 0;
}

.tsearch input::placeholder {
    color: #333;
}

.tsearch .ring {
    width: 16px;
    height: 16px;
}

.tsearch .mic {
    width: 10px;
    height: 14px;
}

.apps {
    display: flex;
    flex: none;
    width: 652px;
    margin-left: 3px;
}

.apps a {
    display: flex;
    align-items: center;
    justify-content: center;
    flex: 1;
}

.apps svg {
    width: 16px;
    height: 18px;
}

.apps .open {
    background: linear-gradient(#79b6e6, #79b6e6) center bottom / 27px 2px no-repeat;
}

.apps .current {
    background-color: #3a3a3a;
}

.tray {
    display: flex;
    align-items: center;
    gap: 5px;
    margin-left: auto;
    padding-right: 14px;
}

.tray svg {
    width: 12px;
    height: 12px;
}

.tray time {
    width: 36px;
    margin-right: 4px;
    text-align: center;
    color: #eee;
    line-height: 13px;
}

.tray .notes {
    width: 16px;
    height: 18px;
}
```
